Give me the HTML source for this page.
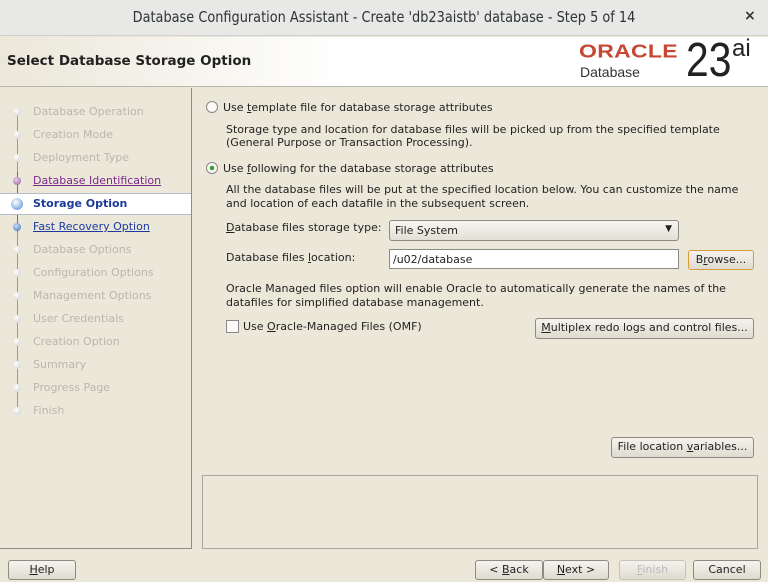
<!DOCTYPE html>
<html><head><meta charset="utf-8"><style>
*{margin:0;padding:0;box-sizing:border-box}
body{width:768px;height:582px;background:#ebe7d9;font-family:"DejaVu Sans",sans-serif;font-size:11px;color:#222;position:relative;overflow:hidden}
.a{position:absolute;white-space:nowrap}
#tb{left:0;top:0;width:768px;height:36px;background:#e8e8e7;border-bottom:1px solid #cfcfcd;border-radius:6px 6px 0 0}
#hd{left:0;top:37px;width:768px;height:50px;background:linear-gradient(90deg,#ebe7d9 0%,#fff 45%);border-bottom:1px solid #b8b5aa}
.nav{left:33px;color:#b9b6ad;font-size:11px}
.dot{position:absolute;left:13px;width:8px;height:8px;border-radius:50%;background:radial-gradient(circle at 40% 35%,#fff,#ccc)}
.btn{position:absolute;border:1px solid #8c8a82;border-radius:3px;background:linear-gradient(#f5f3ec,#dedbd0);text-align:center;font-size:11px;line-height:18px}
u{text-decoration:underline}
.m{margin-top:1px}
</style></head><body>
<div id="tb" class="a"></div>
<div class="a" style="left:0;width:768px;top:8px;text-align:center;font-size:15px;color:#2e3436;font-family:'DejaVu Sans',sans-serif;transform:scaleX(0.86)">Database Configuration Assistant - Create 'db23aistb' database - Step 5 of 14</div>
<div class="a" style="left:744px;top:8px;font-size:14px;font-weight:bold;color:#333">×</div>
<div id="hd" class="a"></div>
<div class="a" style="left:7px;top:53px;font-size:13.5px;font-weight:bold;color:#222">Select Database Storage Option</div>
<div class="a" style="left:579px;top:38px;font-size:23px;font-weight:bold;color:#c74634;font-family:'Liberation Sans',sans-serif;letter-spacing:0.3px;transform:scaleY(0.8)">ORACLE</div>
<div class="a" style="left:580px;top:64px;font-size:14px;color:#333;font-family:'Liberation Sans',sans-serif">Database</div>
<div class="a" style="left:686px;top:33px;font-size:48px;color:#222;font-family:'Liberation Sans',sans-serif;transform:scaleX(0.85);transform-origin:left">23</div>
<div class="a" style="left:732px;top:35px;font-size:24px;color:#222;font-family:'Liberation Sans',sans-serif">ai</div>

<div class="a" style="left:191px;top:88px;width:1px;height:461px;background:#8f8c84"></div>
<div class="a" style="left:0;top:548px;width:192px;height:1px;background:#8f8c84"></div>
<div class="a" style="left:17px;top:112px;width:1px;height:302px;background:#999"></div>
<div class="a" style="left:17px;top:172px;width:1px;height:60px;background:#8a5a9a"></div>
<div class="a" style="left:0;top:193px;width:191px;height:22px;background:#fff;border-top:1px solid #b5bccc;border-bottom:1px solid #b5bccc"></div>

<div class="dot" style="top:108px"></div><div class="a nav" style="top:105px">Database Operation</div>
<div class="dot" style="top:131px"></div><div class="a nav" style="top:128px">Creation Mode</div>
<div class="dot" style="top:154px"></div><div class="a nav" style="top:151px">Deployment Type</div>
<div class="dot" style="top:177px;background:radial-gradient(circle at 40% 35%,#e8cce8,#9a5a9a)"></div><div class="a nav" style="top:174px;color:#7a2a8a"><u>Database Identification</u></div>
<div class="dot" style="top:198px;left:11px;width:12px;height:12px;background:radial-gradient(circle at 40% 35%,#fff,#4a8ad8)"></div><div class="a nav" style="top:197px;color:#1a3a9a;font-weight:bold">Storage Option</div>
<div class="dot" style="top:223px;background:radial-gradient(circle at 40% 35%,#cde,#3a70d0)"></div><div class="a nav" style="top:220px;color:#1a3aa0"><u>Fast Recovery Option</u></div>
<div class="dot" style="top:246px"></div><div class="a nav" style="top:243px">Database Options</div>
<div class="dot" style="top:269px"></div><div class="a nav" style="top:266px">Configuration Options</div>
<div class="dot" style="top:292px"></div><div class="a nav" style="top:289px">Management Options</div>
<div class="dot" style="top:315px"></div><div class="a nav" style="top:312px">User Credentials</div>
<div class="dot" style="top:338px"></div><div class="a nav" style="top:335px">Creation Option</div>
<div class="dot" style="top:361px"></div><div class="a nav" style="top:358px">Summary</div>
<div class="dot" style="top:384px"></div><div class="a nav" style="top:381px">Progress Page</div>
<div class="dot" style="top:407px"></div><div class="a nav" style="top:404px">Finish</div>

<div class="a" style="left:206px;top:101px;width:12px;height:12px;border:1px solid #888;border-radius:50%;background:#fbfaf6"></div>
<div class="a" style="left:223px;top:101px">Use <u>t</u>emplate file for database storage attributes</div>
<div class="a" style="left:226px;top:123px;line-height:13px">Storage type and location for database files will be picked up from the specified template<br>(General Purpose or Transaction Processing).</div>
<div class="a" style="left:206px;top:162px;width:12px;height:12px;border:1px solid #888;border-radius:50%;background:radial-gradient(circle,#3a9a3a 0 2px,#fbfaf6 2.5px)"></div>
<div class="a" style="left:223px;top:162px">Use <u>f</u>ollowing for the database storage attributes</div>
<div class="a" style="left:226px;top:183px;line-height:14px">All the database files will be put at the specified location below. You can customize the name<br>and location of each datafile in the subsequent screen.</div>
<div class="a" style="left:226px;top:221px"><u>D</u>atabase files storage type:</div>
<div class="a" style="left:389px;top:220px;width:290px;height:21px;border:1px solid #8c8a82;border-radius:3px;background:linear-gradient(#f8f6f0,#e2dfd5);padding:3px 5px">File System<span style="position:absolute;right:6px;top:3px;font-size:9px">▼</span></div>
<div class="a" style="left:226px;top:251px">Database files <u>l</u>ocation:</div>
<div class="a" style="left:389px;top:249px;width:290px;height:20px;border:1px solid #8c8a82;background:#fff;padding:3px 3px">/u02/database</div>
<div class="btn" style="left:688px;top:250px;width:66px;height:20px;border-color:#d99a3a">B<u>r</u>owse...</div>
<div class="a" style="left:226px;top:282px;line-height:14px">Oracle Managed files option will enable Oracle to automatically generate the names of the<br>datafiles for simplified database management.</div>
<div class="a" style="left:226px;top:320px;width:13px;height:13px;border:1px solid #888;background:#fbfaf6"></div>
<div class="a" style="left:243px;top:320px">Use <u>O</u>racle-Managed Files (OMF)</div>
<div class="btn" style="left:535px;top:318px;width:219px;height:21px"><u>M</u>ultiplex redo logs and control files...</div>
<div class="btn" style="left:611px;top:437px;width:143px;height:21px">File location <u>v</u>ariables...</div>
<div class="a" style="left:202px;top:475px;width:556px;height:74px;border:1px solid #aaa79e"></div>

<div class="btn" style="left:8px;top:560px;width:68px;height:20px"><u>H</u>elp</div>
<div class="btn" style="left:475px;top:560px;width:68px;height:20px">&lt; <u>B</u>ack</div>
<div class="btn" style="left:543px;top:560px;width:66px;height:20px"><u>N</u>ext &gt;</div>
<div class="btn" style="left:619px;top:560px;width:67px;height:20px;color:#bbb;border-color:#c5c2b8"><u>F</u>inish</div>
<div class="btn" style="left:693px;top:560px;width:68px;height:20px">Cancel</div>
</body></html>
